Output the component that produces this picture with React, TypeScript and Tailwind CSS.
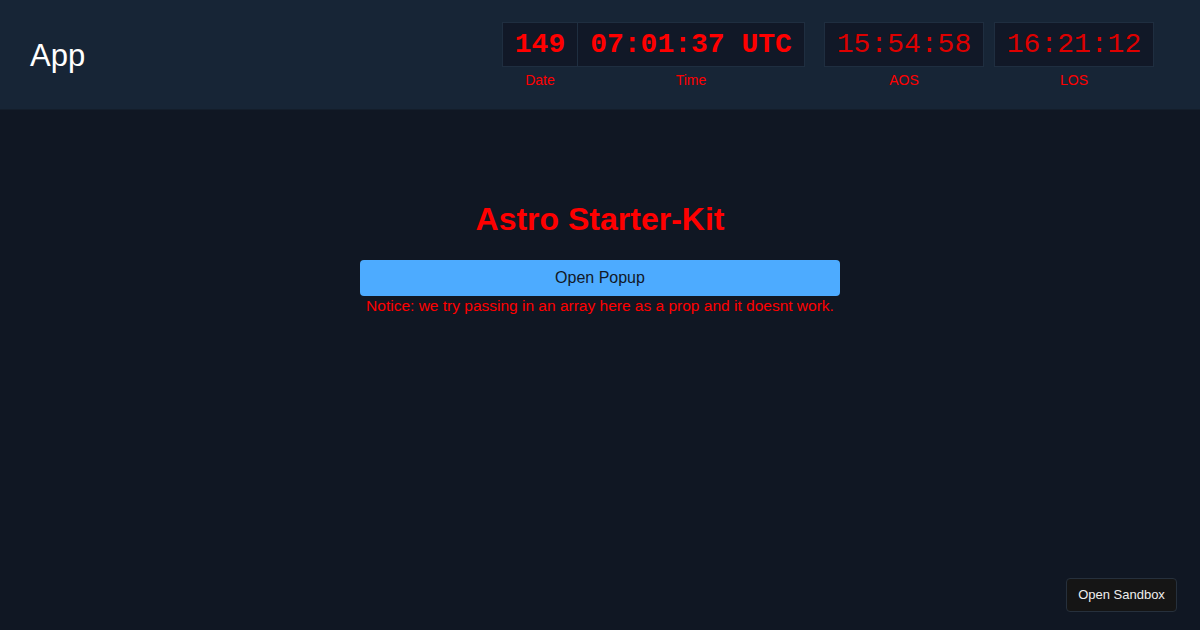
import React from 'react';

const sans = { fontFamily: '"Liberation Sans", Arial, sans-serif' };

function Clock({ value, label, width, bold }: { value: string; label: string; width: string; bold?: boolean }) {
  return (
    <div className="flex flex-col items-center">
      <div
        className={`${width} h-[45px] flex items-center justify-center bg-[#111827] border border-[#1f2e40] text-[28px] leading-none font-['Liberation_Mono',monospace] ${
          bold ? 'font-bold text-[#ff0000]' : 'text-[#dd0000]'
        }`}
      >
        {value}
      </div>
      <div className="mt-[3px] text-[14px] text-[#ff0000] font-['Liberation_Sans',Arial,sans-serif]">{label}</div>
    </div>
  );
}

export default function App() {
  return (
    <div className="w-[1200px] h-[630px] bg-[#101723] flex flex-col relative" style={sans}>
      <header className="h-[110px] bg-[#172536] flex items-start justify-between pl-[30px] pr-[46px] border-b border-[#141e2b]">
        <div className="mt-[40px] text-[31px] leading-none text-white">App</div>
        <div className="flex items-start mt-[22px]">
          <div className="flex">
            <Clock value="149" label="Date" width="w-[76px]" bold />
            <div className="-ml-px">
              <Clock value="07:01:37 UTC" label="Time" width="w-[228px]" bold />
            </div>
          </div>
          <div className="ml-[19px]">
            <Clock value="15:54:58" label="AOS" width="w-[160px]" />
          </div>
          <div className="ml-[10px]">
            <Clock value="16:21:12" label="LOS" width="w-[160px]" />
          </div>
        </div>
      </header>

      <main className="flex flex-col items-center pt-[90px]">
        <h1 className="text-[32px] leading-[38px] font-bold text-[#ff0000]">Astro Starter-Kit</h1>
        <button className="mt-[22px] w-[480px] h-[36px] rounded bg-[#4dabff] text-[16px] text-[#111827]">
          Open Popup
        </button>
        <p className="text-[15.5px] leading-[20px] text-[#ff0000]">
          Notice: we try passing in an array here as a prop and it doesnt work.
        </p>
      </main>

      <button className="absolute right-[23px] bottom-[18px] w-[111px] h-[34px] rounded bg-[#151515] border border-[#26303c] text-[13px] text-[#eeeeee]">
        Open Sandbox
      </button>
    </div>
  );
}
